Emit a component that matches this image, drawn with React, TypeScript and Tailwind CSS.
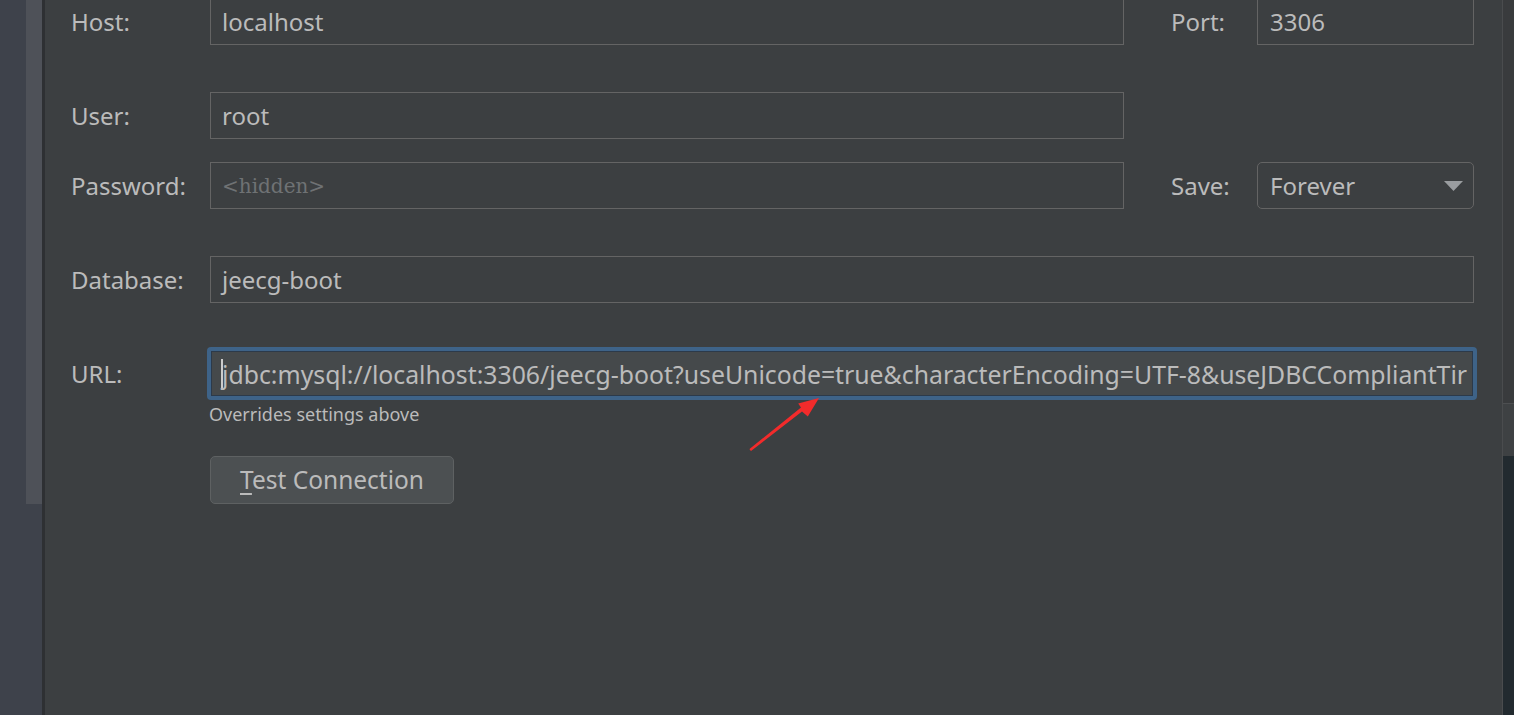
import React from "react";

const font = { fontFamily: '"Noto Sans", "Open Sans", sans-serif' };

function Label({ children, w = "w-[139px]" }: { children: React.ReactNode; w?: string }) {
  return <div className={`${w} shrink-0 text-[24px] text-[#bbbbbb] leading-none`}>{children}</div>;
}

function Field({ value, className = "" }: { value: string; className?: string }) {
  return (
    <div
      className={`h-[47px] min-w-0 border border-[#646464] flex items-center pl-[11px] text-[24px] leading-none text-[#bbbbbb] ${className}`}
    >
      {value}
    </div>
  );
}

export default function App() {
  return (
    <div className="relative w-[1514px] h-[715px] overflow-hidden flex bg-[#3c3f41]" style={font}>
      <div className="w-[26px] shrink-0 bg-[#3e424b]" />
      <div className="w-[16px] shrink-0 bg-[#3e424b]">
        <div className="h-[504px] bg-[#4e5158]" />
      </div>
      <div className="w-[3px] shrink-0 bg-[#2e3033]" />
      <div className="flex-1 min-w-0 bg-[#3c3f41] pl-[26px] pr-[28px] mt-[-2px] flex flex-col">
        {/* Host / Port */}
        <div className="flex items-center">
          <Label>Host:</Label>
          <Field value="localhost" className="w-[914px] shrink-0" />
          <div className="w-[47px] shrink-0" />
          <Label w="w-[86px]">Port:</Label>
          <Field value="3306" className="flex-1 pl-[12px]" />
        </div>
        {/* User */}
        <div className="flex items-center mt-[47px]">
          <Label>User:</Label>
          <Field value="root" className="w-[914px] shrink-0" />
        </div>
        {/* Password / Save */}
        <div className="flex items-center mt-[23px]">
          <Label>Password:</Label>
          <div
            className="w-[914px] shrink-0 h-[47px] border border-[#646464] flex items-center pl-[11px] text-[20px] text-[#6f7274]"
            style={{ fontFamily: '"DejaVu Serif", "Liberation Serif", serif' }}
          >
            &lt;hidden&gt;
          </div>
          <div className="w-[47px] shrink-0" />
          <Label w="w-[86px]">Save:</Label>
          <div className="flex-1 min-w-0 h-[47px] border border-[#646464] rounded-[5px] flex items-center justify-between pl-[12px] pr-[10px] text-[24px] text-[#bbbbbb] leading-none">
            <span>Forever</span>
            <svg width="19" height="10" viewBox="0 0 19 10">
              <polygon points="0,0 19,0 9.5,10" fill="#9a9da0" />
            </svg>
          </div>
        </div>
        {/* Database */}
        <div className="flex items-center mt-[47px]">
          <Label>Database:</Label>
          <Field value="jeecg-boot" className="flex-1 h-[46px] pl-[10px]" />
        </div>
        {/* URL */}
        <div className="flex items-center mt-[44px]">
          <Label w="w-[136px]">URL:</Label>
          <div className="flex-1 min-w-0 mr-[-3px] h-[53px] rounded-[4px] bg-[#3e6388] p-[4px]">
            <div className="h-full min-w-0 bg-[#45494b] border border-[#2c3a4a] flex items-center pl-[9px] pr-[9px] overflow-hidden whitespace-nowrap text-[24.8px] text-[#bbbbbb] leading-[34px]">
              <span className="w-[2px] h-[30px] bg-[#cccccc] mr-[-1px] shrink-0" />
              <span>jdbc:mysql://localhost:3306/jeecg-boot?useUnicode=true&amp;characterEncoding=UTF-8&amp;useJDBCCompliantTir</span>
            </div>
          </div>
        </div>
        <div className="pl-[138px] mt-[2px] text-[18px] text-[#bbbbbb] leading-[24px]">Overrides settings above</div>
        {/* Button */}
        <div className="pl-[139px] mt-[30px]">
          <div className="w-[244px] h-[48px] rounded-[5px] bg-[#4c5052] border border-[#5e6162] flex items-center justify-center text-[24.5px] text-[#bbbbbb] leading-none">
            <span>
              <span className="underline underline-offset-[4px]">T</span>est Connection
            </span>
          </div>
        </div>
      </div>
      <div className="w-[1px] shrink-0 bg-[#4a4c4e]" />
      <div className="w-[11px] shrink-0 flex flex-col">
        <div className="h-[403px] bg-[#393b3d]" />
        <div className="h-[1px] bg-[#4d4f51]" />
        <div className="h-[52px] bg-[#3e4143]" />
        <div className="flex-1 bg-[#222a2f]" />
      </div>
      <svg className="absolute inset-0 pointer-events-none" width="1514" height="715" viewBox="0 0 1514 715">
        <polygon
          points="750,450 751,451 802,411.5 807.8,416.4 819,398 798.2,403.6 801,407.5 749.5,449"
          fill="#f22b2b"
        />
      </svg>
    </div>
  );
}
